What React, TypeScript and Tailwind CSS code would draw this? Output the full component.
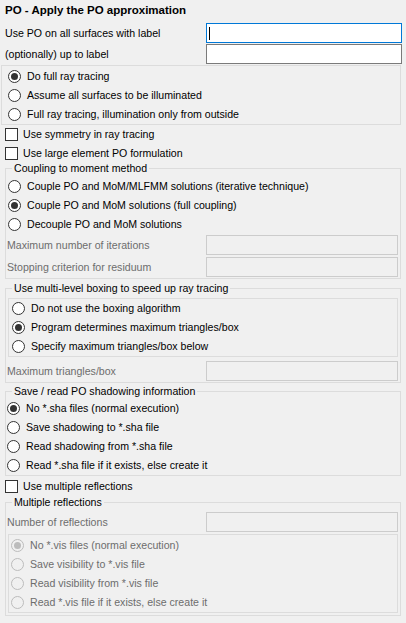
import React from "react";

type RadioProps = { label: string; checked?: boolean; disabled?: boolean };

function Radio({ label, checked, disabled }: RadioProps) {
  return (
    <div className="flex h-[19px] items-center gap-[6px] leading-none">
      <span
        className={`flex h-[13px] w-[13px] shrink-0 items-center justify-center rounded-full border ${
          disabled ? "border-[#bcbcbc] bg-[#f0f0f0]" : "border-[#333333] bg-white"
        }`}
      >
        {checked && (
          <span
            className={`h-[7px] w-[7px] rounded-full ${
              disabled ? "bg-[#bcbcbc]" : "bg-[#333333]"
            }`}
          />
        )}
      </span>
      <span className={disabled ? "text-[#6d6d6d]" : ""}>{label}</span>
    </div>
  );
}

function Check({ label, className = "" }: { label: string; className?: string }) {
  return (
    <div className={`flex items-center gap-[5px] pl-[5px] leading-none ${className}`}>
      <span className="h-[13px] w-[13px] shrink-0 border border-[#333333] bg-white" />
      <span>{label}</span>
    </div>
  );
}

function DisabledField({ label, className = "" }: { label: string; className?: string }) {
  return (
    <div className={`flex h-[20px] items-center pl-[1px] leading-none ${className}`}>
      <span className="text-[#6d6d6d]">{label}</span>
      <div className="ml-auto mr-[2px] h-[20px] w-[192px] border border-[#cccccc] bg-[#f0f0f0]" />
    </div>
  );
}

function Group({
  title,
  className = "",
  children,
}: {
  title: string;
  className?: string;
  children: React.ReactNode;
}) {
  return (
    <fieldset className={`ml-[5px] w-[396px] border border-[#dcdcdc] ${className}`}>
      <legend className="ml-[6px] px-[2px] leading-[12px]">{title}</legend>
      {children}
    </fieldset>
  );
}

export default function App() {
  return (
    <div className="h-[623px] w-[406px] overflow-hidden bg-[#f0f0f0] font-['Liberation_Sans',Arial,sans-serif] text-[10.6px] text-black">
      <div className="flex h-[22px] items-center pl-[5px] text-[11.5px] font-bold">
        PO - Apply the PO approximation
      </div>

      <div className="mt-[1px] flex h-[20px] items-center pl-[5px] pr-[4px] leading-none">
        <span>Use PO on all surfaces with label</span>
        <div className="ml-auto flex h-[20px] w-[196px] items-center border border-[#0078d7] bg-white pl-[2px]">
          <span className="h-[13px] w-[1px] bg-black" />
        </div>
      </div>
      <div className="mt-[1px] flex h-[20px] items-center pl-[5px] pr-[4px] leading-none">
        <span>(optionally) up to label</span>
        <div className="ml-auto h-[20px] w-[196px] border border-[#7a7a7a] bg-white" />
      </div>

      <div className="ml-[1px] mt-[1px] w-[400px] border border-[#dcdcdc] pl-[6px] pt-[1px]">
        <Radio label="Do full ray tracing" checked />
        <Radio label="Assume all surfaces to be illuminated" />
        <Radio label="Full ray tracing, illumination only from outside" />
      </div>

      <Check label="Use symmetry in ray tracing" className="h-[19px]" />
      <Check label="Use large element PO formulation" className="h-[18px]" />

      <Group title="Coupling to moment method" className="pb-[1px]">
        <div className="mt-[3px] pl-[2px]">
          <Radio label="Couple PO and MoM/MLFMM solutions (iterative technique)" />
          <Radio label="Couple PO and MoM solutions (full coupling)" checked />
          <Radio label="Decouple PO and MoM solutions" />
        </div>
        <DisabledField label="Maximum number of iterations" className="mt-[1px]" />
        <DisabledField label="Stopping criterion for residuum" className="mt-[2px]" />
      </Group>

      <Group title="Use multi-level boxing to speed up ray tracing" className="mt-[3px] pb-[1px]">
        <div className="mx-[2px] mt-[4px] border border-[#dcdcdc] pl-[3px]">
          <Radio label="Do not use the boxing algorithm" />
          <Radio label="Program determines maximum triangles/box" checked />
          <Radio label="Specify maximum triangles/box below" />
        </div>
        <DisabledField label="Maximum triangles/box" className="mt-[4px]" />
      </Group>

      <Group title="Save / read PO shadowing information" className="mt-[2px]">
        <div className="mt-[2px] pl-[1px]">
          <Radio label="No *.sha files (normal execution)" checked />
          <Radio label="Save shadowing to *.sha file" />
          <Radio label="Read shadowing from *.sha file" />
          <Radio label="Read *.sha file if it exists, else create it" />
        </div>
      </Group>

      <Check label="Use multiple reflections" className="mt-[1px] h-[19px]" />

      <Group title="Multiple reflections" className="pb-[2px]">
        <DisabledField label="Number of reflections" className="mt-[4px]" />
        <div className="mx-[2px] mt-[2px] border border-[#dcdcdc] pl-[2px] pt-[1px]">
          <Radio label="No *.vis files (normal execution)" checked disabled />
          <Radio label="Save visibility to *.vis file" disabled />
          <Radio label="Read visibility from *.vis file" disabled />
          <Radio label="Read *.vis file if it exists, else create it" disabled />
        </div>
      </Group>
    </div>
  );
}
